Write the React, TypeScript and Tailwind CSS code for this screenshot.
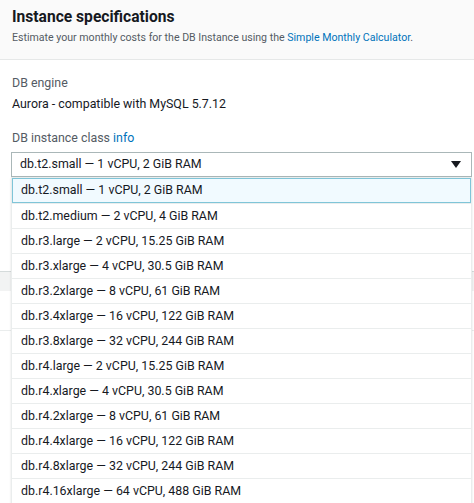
import React from 'react';

const options = [
  'db.t2.small — 1 vCPU, 2 GiB RAM',
  'db.t2.medium — 2 vCPU, 4 GiB RAM',
  'db.r3.large — 2 vCPU, 15.25 GiB RAM',
  'db.r3.xlarge — 4 vCPU, 30.5 GiB RAM',
  'db.r3.2xlarge — 8 vCPU, 61 GiB RAM',
  'db.r3.4xlarge — 16 vCPU, 122 GiB RAM',
  'db.r3.8xlarge — 32 vCPU, 244 GiB RAM',
  'db.r4.large — 2 vCPU, 15.25 GiB RAM',
  'db.r4.xlarge — 4 vCPU, 30.5 GiB RAM',
  'db.r4.2xlarge — 8 vCPU, 61 GiB RAM',
  'db.r4.4xlarge — 16 vCPU, 122 GiB RAM',
  'db.r4.8xlarge — 32 vCPU, 244 GiB RAM',
  'db.r4.16xlarge — 64 vCPU, 488 GiB RAM',
];

export default function App() {
  return (
    <div className="w-[474px] h-[503px] overflow-hidden bg-white font-['Roboto',sans-serif] text-[#16191f]">
      {/* header section */}
      <div className="h-[60px] bg-[#fafafa] border-b border-[#e6e8e8] px-3 pt-[5px]">
        <h2 className="text-[15.6px] font-bold leading-[24px] whitespace-nowrap">Instance specifications</h2>
        <p className="text-[10.6px] leading-[18px] text-[#545b64] whitespace-nowrap">
          Estimate your monthly costs for the DB Instance using the{' '}
          <span className="text-[#0073bb]">Simple Monthly Calculator</span>.
        </p>
      </div>

      {/* engine */}
      <div className="px-3 pt-[13px] text-[12.4px]">
        <div className="leading-[20px] text-[#545b64]">DB engine</div>
        <div className="leading-[20px] mt-[1px]">Aurora - compatible with MySQL 5.7.12</div>
        <div className="leading-[20px] text-[#545b64] mt-[14px]">
          DB instance class <span className="text-[#0073bb]">info</span>
        </div>
      </div>

      {/* select + open menu */}
      <div className="relative mt-[4px] pl-[11px] pr-[2px] text-[12.4px]">
        <div className="h-[25px] border border-[#aab7b8] bg-white flex items-center justify-between pl-[8px] pr-[10px]">
          <span>db.t2.small — 1 vCPU, 2 GiB RAM</span>
          <svg width="10" height="7" viewBox="0 0 10 7">
            <path d="M0 0 H10 L5 7 Z" fill="#16191f" />
          </svg>
        </div>

        {/* table behind the menu */}
        <div className="mt-[94px] -ml-[11px] -mr-[2px] border-t border-[#d5dbdb]">
          <div className="h-[19px] bg-[#f2f3f3]" />
          <div className="h-[40px] border-b border-[#eaeded]" />
        </div>

        <div className="absolute left-[11px] right-[2px] top-[25px] bg-white border border-[#eaeded] shadow-[0_1px_2px_rgba(0,0,0,0.12)]">
          {options.map((opt, i) => (
            <div
              key={opt}
              className={
                i === 0
                  ? 'h-[25px] flex items-center pl-[8px] bg-[#f1faff] border border-[#7fc5d8]'
                  : 'h-[25px] flex items-center pl-[9px] border-t border-[#eaeded]'
              }
            >
              {opt}
            </div>
          ))}
        </div>
      </div>
    </div>
  );
}
